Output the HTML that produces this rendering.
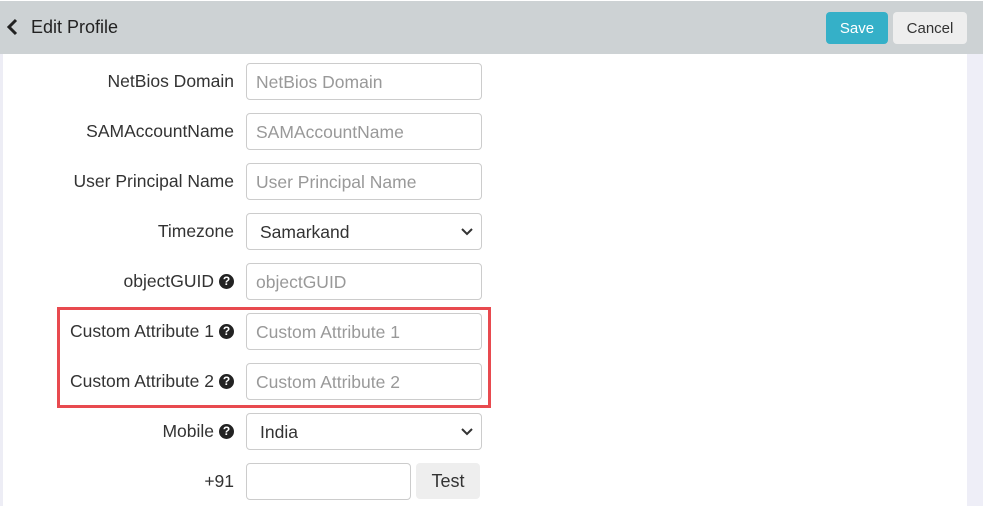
<!DOCTYPE html>
<html><head><style>
*{box-sizing:border-box;margin:0;padding:0}
body{width:983px;height:506px;overflow:hidden;background:#fff;font-family:"Liberation Sans",Arial,sans-serif;position:relative;color:#333}
.hdr{position:absolute;left:0;top:1px;width:983px;height:53px;background:#cdd2d4}
.title{position:absolute;left:31px;top:17px;font-size:18px;color:#222}
.back{position:absolute;left:6px;top:18px}
.btn{position:absolute;top:12px;height:32px;border-radius:4px;font-size:15px;line-height:33px;text-align:center}
.lstrip{position:absolute;left:0;top:54px;width:3px;height:452px;background:#ededf5}
.rstrip{position:absolute;left:967px;top:54px;width:16px;height:452px;background:#eeeef7}
.lab{position:absolute;right:749px;font-size:17.5px;color:#333;white-space:nowrap;display:flex;align-items:center;gap:5px}
.q{display:inline-block;width:15px;height:15px;border-radius:50%;background:#222;color:#fff;font-size:12px;font-weight:bold;line-height:15px;text-align:center}
.inp{position:absolute;left:246px;width:236px;height:37px;border:1px solid #ccc;border-radius:4px;font-size:17.5px;color:#999;padding:8px 9px}
.sel{color:#333;padding-left:13px}
.chev{position:absolute;right:8px;top:14px}
.red{position:absolute;left:57px;top:307px;width:434px;height:101px;border:3px solid #e84a4f}
</style></head><body>
<div class="hdr"></div>
<svg class="back" width="14" height="18" viewBox="0 0 14 18"><path d="M10 2 L3 9 L10 16" stroke="#222" stroke-width="3" fill="none"/></svg>
<div class="title">Edit Profile</div>
<div class="btn" style="left:826px;width:62px;background:#35b0c8;color:#fff">Save</div>
<div class="btn" style="left:893px;width:74px;background:#eeeeee;color:#333">Cancel</div>
<div class="lstrip"></div><div class="rstrip"></div>

<div class="lab" style="top:71px">NetBios Domain</div>
<div class="inp" style="top:63px">NetBios Domain</div>
<div class="lab" style="top:121px">SAMAccountName</div>
<div class="inp" style="top:113px">SAMAccountName</div>
<div class="lab" style="top:171px">User Principal Name</div>
<div class="inp" style="top:163px">User Principal Name</div>
<div class="lab" style="top:221px">Timezone</div>
<div class="inp sel" style="top:213px">Samarkand<svg class="chev" width="12" height="8" viewBox="0 0 12 8"><path d="M1 1 L6 6 L11 1" stroke="#333" stroke-width="2" fill="none"/></svg></div>
<div class="lab" style="top:271px">objectGUID <span class="q">?</span></div>
<div class="inp" style="top:263px">objectGUID</div>
<div class="lab" style="top:321px">Custom Attribute 1 <span class="q">?</span></div>
<div class="inp" style="top:313px">Custom Attribute 1</div>
<div class="lab" style="top:371px">Custom Attribute 2 <span class="q">?</span></div>
<div class="inp" style="top:363px">Custom Attribute 2</div>
<div class="red"></div>
<div class="lab" style="top:421px">Mobile <span class="q">?</span></div>
<div class="inp sel" style="top:413px">India<svg class="chev" width="12" height="8" viewBox="0 0 12 8"><path d="M1 1 L6 6 L11 1" stroke="#333" stroke-width="2" fill="none"/></svg></div>
<div class="lab" style="top:471px;right:749px">+91</div>
<div class="inp" style="top:463px;width:165px"></div>
<div class="btn" style="left:416px;top:463px;width:64px;height:36px;line-height:37px;background:#eeeeee;color:#333;font-size:18px">Test</div>
</body></html>
